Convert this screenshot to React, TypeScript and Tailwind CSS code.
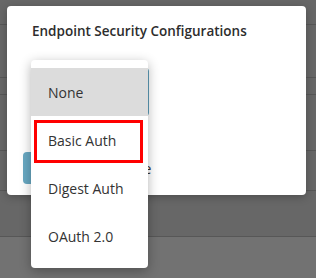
import React from 'react';

const rows = [25, 53, 17, 56, 40, 46];

const options = ['None', 'Basic Auth', 'Digest Auth', 'OAuth 2.0'];

const App: React.FC = () => {
    return (
        <div className="relative w-[316px] h-[278px] overflow-hidden bg-[#676767] font-['Open_Sans',sans-serif]">
            {/* table rows behind the overlay */}
            <div className="flex flex-col">
                {rows.map((h, i) => (
                    <div key={i} style={{ height: h }} className="border-b border-[#575757]" />
                ))}
                <div className="h-[41px] bg-[#727272]" />
            </div>

            {/* modal */}
            <div className="absolute left-[7px] top-[6px] w-[299px] h-[189px] bg-white rounded-[4px] shadow-[0_2px_8px_rgba(0,0,0,0.25)]">
                <h3 className="pl-[25px] pt-[15px] text-[13.5px] font-semibold text-[#2d2d2d] leading-[20px]">
                    Endpoint Security Configurations
                </h3>
                <div className="ml-[25px] mt-[27px] w-[117px] h-[48px] border border-[#5f9fbb] rounded-[3px]" />
                <div className="flex items-center mt-[36px] ml-[16px] gap-[3px]">
                    <div className="w-[90px] h-[32px] rounded-[4px] bg-[#68a8c2]" />
                    <span className="text-[14px] text-[#333]">Close</span>
                </div>
            </div>

            {/* dropdown menu */}
            <div className="absolute left-[31px] top-[60px] w-[117px] bg-white rounded-[4px] py-[8px] shadow-[0_3px_12px_rgba(0,0,0,0.3)]">
                {options.map((o, i) => (
                    <div
                        key={o}
                        className={`h-[48px] flex items-center pl-[17px] text-[14px] text-[#333] ${i === 0 ? 'bg-[#dcdcdc]' : ''}`}
                    >
                        {o}
                    </div>
                ))}
                <div className="absolute left-[3px] top-[60px] w-[109px] h-[43px] border-[3px] border-[#ff0000]" />
            </div>
        </div>
    );
};

export default App;
